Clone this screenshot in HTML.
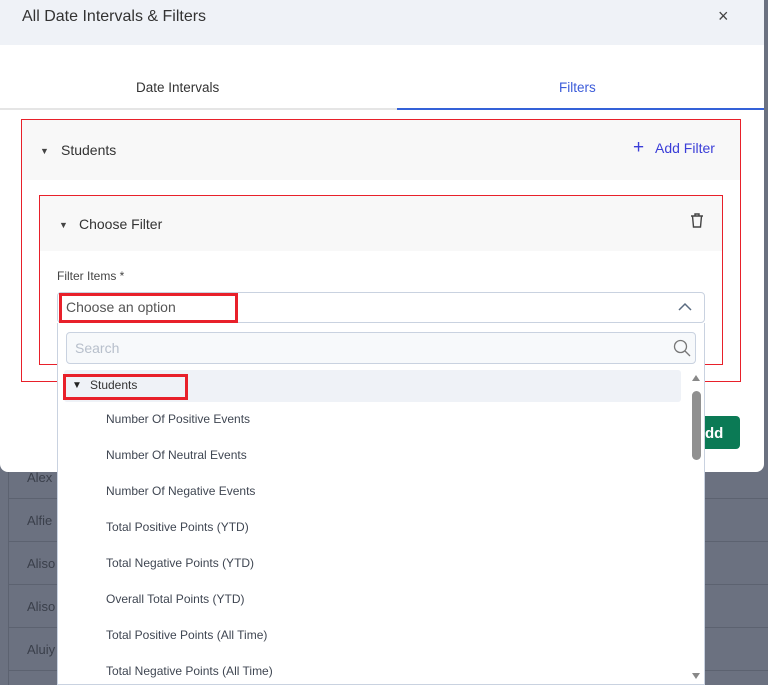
<!DOCTYPE html>
<html><head><style>
*{box-sizing:border-box;margin:0;padding:0}
body{width:768px;height:685px;overflow:hidden;position:relative;background:#6b7180;font-family:"Liberation Sans",sans-serif;}
.a{position:absolute}
.row{position:absolute;left:8px;width:760px;height:1px;background:#5c6270}
.rt{position:absolute;left:27px;font-size:13px;color:#3a3f4a}
.item{position:absolute;left:106px;font-size:12px;color:#3f4652}
</style></head><body>
<div class="a" style="left:8px;top:470px;width:1px;height:215px;background:#5c6270"></div>
<div class="row" style="top:498px"></div><div class="row" style="top:541px"></div><div class="row" style="top:584px"></div><div class="row" style="top:627px"></div><div class="row" style="top:670px"></div>
<div class="rt" style="top:470px">Alex</div><div class="rt" style="top:513px">Alfie</div><div class="rt" style="top:556px">Aliso</div><div class="rt" style="top:599px">Aliso</div><div class="rt" style="top:642px">Aluiy</div>

<div class="a" style="left:0;top:0;width:764px;height:472px;background:#fff;border-radius:0 0 8px 8px"></div>
<div class="a" style="left:0;top:0;width:764px;height:45px;background:#eff2f7"></div>
<div class="a" style="left:22px;top:8px;font-size:16px;color:#333">All Date Intervals &amp; Filters</div>
<div class="a" style="left:718px;top:6px;font-size:18px;color:#444">×</div>
<div class="a" style="left:136px;top:80px;font-size:13.5px;color:#333">Date Intervals</div>
<div class="a" style="left:559px;top:80px;font-size:13.5px;color:#3b5bd9">Filters</div>
<div class="a" style="left:0;top:108px;width:397px;height:2px;background:#e5e5e5"></div>
<div class="a" style="left:397px;top:108px;width:367px;height:2px;background:#3461d8"></div>

<div class="a" style="left:21px;top:119px;width:720px;height:263px;border:1px solid #e8202a"></div>
<div class="a" style="left:22px;top:120px;width:718px;height:60px;background:#f8f8f8"></div>
<div class="a" style="left:40px;top:146px;font-size:9px;color:#444">▼</div>
<div class="a" style="left:61px;top:142px;font-size:14px;color:#333">Students</div>
<div class="a" style="left:633px;top:137px;font-size:19px;color:#3b3ed8">+</div>
<div class="a" style="left:655px;top:140px;font-size:14px;color:#3b3ed8">Add Filter</div>

<div class="a" style="left:39px;top:195px;width:684px;height:170px;border:1px solid #e8202a"></div>
<div class="a" style="left:40px;top:196px;width:682px;height:55px;background:#f8f8f8"></div>
<div class="a" style="left:59px;top:220px;font-size:9px;color:#444">▼</div>
<div class="a" style="left:79px;top:216px;font-size:14px;color:#333">Choose Filter</div>
<svg class="a" style="left:690px;top:213px" width="14" height="16" viewBox="0 0 14 16"><path d="M1 3h12M5 3V1h4v2M2.5 3l1 11h7l1-11" fill="none" stroke="#444" stroke-width="1.4"/></svg>
<div class="a" style="left:57px;top:269px;font-size:12px;color:#444">Filter Items *</div>
<div class="a" style="left:57px;top:292px;width:648px;height:31px;border:1px solid #c9d2e0;border-radius:4px;background:#fff"></div>
<div class="a" style="left:59px;top:293px;width:179px;height:30px;border:3px solid #e8202a"></div>
<div class="a" style="left:66px;top:299px;font-size:14px;color:#555">Choose an option</div>
<svg class="a" style="left:678px;top:302px" width="14" height="9"><path d="M1 8L7 2l6 6" fill="none" stroke="#5a6b80" stroke-width="1.5"/></svg>

<div class="a" style="left:57px;top:323px;width:648px;height:362px;background:#fff;border:1px solid #c9d2e0;border-top:none"></div>
<div class="a" style="left:66px;top:332px;width:630px;height:32px;border:1px solid #c9d2e0;border-radius:4px;background:#f7f9fb"></div>
<div class="a" style="left:75px;top:340px;font-size:14px;color:#b7bfcb">Search</div>
<svg class="a" style="left:673px;top:339px" width="18" height="18"><circle cx="7.5" cy="7.5" r="6" fill="none" stroke="#777" stroke-width="1.3"/><path d="M12 12l5 5" stroke="#777" stroke-width="1.3"/></svg>
<div class="a" style="left:64px;top:370px;width:617px;height:32px;background:#eff2f7;border-radius:3px"></div>
<div class="a" style="left:63px;top:374px;width:125px;height:26px;border:3px solid #e8202a"></div>
<div class="a" style="left:72px;top:380px;font-size:10px;color:#222">▼</div>
<div class="a" style="left:90px;top:378px;font-size:12px;color:#333">Students</div>
<div class="a" style="left:692px;top:375px;width:0;height:0;border-left:4px solid transparent;border-right:4px solid transparent;border-bottom:6px solid #888"></div>
<div class="a" style="left:692px;top:391px;width:9px;height:69px;background:#909090;border-radius:5px"></div>
<div class="a" style="left:692px;top:673px;width:0;height:0;border-left:4px solid transparent;border-right:4px solid transparent;border-top:6px solid #888"></div>
<div class="a" style="left:705px;top:416px;width:35px;height:33px;background:#0b7a55;border-radius:0 4px 4px 0"></div>
<div class="a" style="left:705px;top:425px;font-size:15px;font-weight:bold;color:#fff">dd</div>

<div class="item" style="top:412px">Number Of Positive Events</div>
<div class="item" style="top:448px">Number Of Neutral Events</div>
<div class="item" style="top:484px">Number Of Negative Events</div>
<div class="item" style="top:520px">Total Positive Points (YTD)</div>
<div class="item" style="top:556px">Total Negative Points (YTD)</div>
<div class="item" style="top:592px">Overall Total Points (YTD)</div>
<div class="item" style="top:628px">Total Positive Points (All Time)</div>
<div class="item" style="top:664px">Total Negative Points (All Time)</div>
</body></html>
